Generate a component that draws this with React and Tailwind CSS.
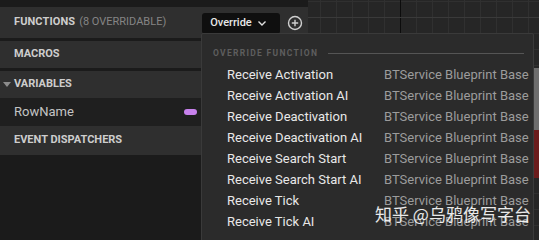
import React from 'react';

// entradas del menú de override
const overrides = [
  'Receive Activation',
  'Receive Activation AI',
  'Receive Deactivation',
  'Receive Deactivation AI',
  'Receive Search Start',
  'Receive Search Start AI',
  'Receive Tick',
  'Receive Tick AI',
];

const SectionRow = ({ children, h }) => (
  <div className={`flex items-center pl-[14px] bg-[#2f2f2f] ${h}`}>{children}</div>
);

const App = () => {
  return (
    <div className="relative w-[539px] h-[240px] overflow-hidden bg-[#1b1b1b] font-['Roboto',sans-serif] flex">
      {/* Panel izquierdo (My Blueprint) */}
      <div className="w-[308px] shrink-0 flex flex-col bg-[#1b1b1b] pt-[7px]">
        <div className="h-[31px] flex items-center bg-[#2f2f2f] pl-[14px]">
          <span className="text-[11px] font-bold text-[#cdcdcd] tracking-[0.1px]">FUNCTIONS</span>
          <span className="text-[11px] text-[#858585] ml-[4px]">(8 OVERRIDABLE)</span>
          <div className="ml-[36px] mt-[1px] h-[21px] w-[78px] rounded-[3px] bg-[#0f0f0f] flex items-center pl-[8px] gap-[5px]">
            <span className="text-[11px] font-medium text-[#e8e8e8]">Override</span>
            <svg width="10" height="8" viewBox="0 0 10 8" fill="none">
              <path d="M1.5 2.5 L5 6 L8.5 2.5" stroke="#e0e0e0" strokeWidth="1.4" />
            </svg>
          </div>
          <svg className="ml-[7px]" width="16" height="16" viewBox="0 0 16 16" fill="none">
            <circle cx="8" cy="8" r="6.5" stroke="#cfcfcf" strokeWidth="1.4" />
            <path d="M8 4.8 V11.2 M4.8 8 H11.2" stroke="#cfcfcf" strokeWidth="1.4" />
          </svg>
        </div>
        <div className="h-[3px]" />
        <SectionRow h="h-[27px]">
          <span className="text-[11px] font-bold text-[#cdcdcd]">MACROS</span>
        </SectionRow>
        <div className="h-[3px]" />
        <div className="h-[27px] flex items-center bg-[#2f2f2f] pl-[3px]">
          <svg width="8" height="6" viewBox="0 0 8 6">
            <path d="M0 0 H8 L4 5 Z" fill="#8c8c8c" />
          </svg>
          <span className="ml-[3px] text-[11px] font-bold text-[#cdcdcd]">VARIABLES</span>
        </div>
        <div className="h-[28px] flex items-center bg-[#1f1f1f] pl-[14px]">
          <span className="text-[13px] text-[#c4c4c4]">RowName</span>
          <div className="ml-[110px] w-[13px] h-[6px] rounded-full bg-[#c781ec]" />
          <span className="ml-[5px] text-[13px] text-[#c4c4c4]">Name</span>
        </div>
        <SectionRow h="h-[29px]">
          <span className="text-[11px] font-bold text-[#cdcdcd]">EVENT DISPATCHERS</span>
        </SectionRow>
      </div>

      {/* Grafo */}
      <div className="flex-1 h-full bg-[#262626] bg-[linear-gradient(to_right,#303030_1px,transparent_1px),linear-gradient(to_bottom,#303030_1px,transparent_1px)] bg-[length:16px_16px] bg-[position:12px_1px]" />
      <div className="absolute left-[400px] top-0 w-[1px] h-[33px] bg-[#0c0c0c]" />
      <div className="absolute left-[308px] top-[17px] w-[231px] h-[1px] bg-[#3a3a3a]" />
      {/* nodos del grafo asomando a la derecha */}
      <div className="absolute left-[534px] top-[68px] w-[5px] h-[62px] bg-[#6e6e6e]" />
      <div className="absolute left-[534px] top-[130px] w-[5px] h-[48px] bg-[#6b1c1c]" />

      {/* Menú desplegable Override */}
      <div className="absolute left-[201px] top-[33px] w-[333px] h-[220px] bg-[#2b2b2b] border border-[#3a3a3a] rounded-[2px]">
        <div className="flex items-center pl-[11px] pr-[9px] mt-[13px] gap-[10px]">
          <span className="text-[8.5px] font-bold tracking-[1.3px] text-[#5e5e5e]">OVERRIDE FUNCTION</span>
          <div className="flex-1 h-[1px] bg-[#555555]" />
        </div>
        <div className="mt-[5px] flex flex-col">
          {overrides.map((name) => (
            <div key={name} className="h-[21px] flex items-center pl-[25px] leading-[16px]">
              <span className="w-[157px] text-[13px] text-[#e8e8e8]">{name}</span>
              <span className="text-[13px] text-[#9c9c9c]">BTService Blueprint Base</span>
            </div>
          ))}
        </div>
      </div>

      {/* marca de agua */}
      <div className="absolute left-[375px] top-[203px] text-[17px] leading-[22px] text-white/90 font-['Noto_Sans_CJK_SC',sans-serif]">
        知乎 @乌鸦像写字台
      </div>
    </div>
  );
};

export default App;
